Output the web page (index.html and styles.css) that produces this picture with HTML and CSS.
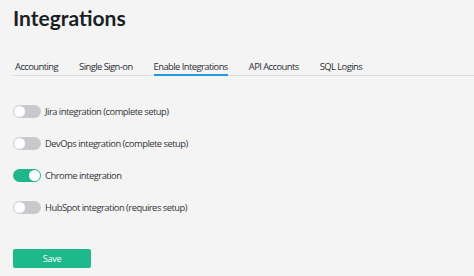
FILE: index.html
```html
<!DOCTYPE html>
<html lang="en">
<head>
  <meta charset="UTF-8" />
  <title>Integrations</title>
  <meta name="viewport" content="width=device-width, initial-scale=1.0" />
  <link rel="stylesheet" href="styles.css">
</head>
<body>
  <div class="page">
    <h1>Integrations</h1>

    <nav class="tabs">
      <a href="#">Accounting</a>
      <a href="#">Single Sign-on</a>
      <a href="#" class="active">Enable Integrations</a>
      <a href="#">API Accounts</a>
      <a href="#">SQL Logins</a>
    </nav>

    <ul class="toggles">
      <li><span class="switch"></span>Jira integration (complete setup)</li>
      <li><span class="switch"></span>DevOps integration (complete setup)</li>
      <li><span class="switch on"></span>Chrome integration</li>
      <li><span class="switch"></span>HubSpot integration (requires setup)</li>
    </ul>

    <button class="btn">Save</button>
  </div>
</body>
</html>
```

FILE: styles.css
```css
* { margin: 0; padding: 0; box-sizing: border-box; }
html, body { height: 100%; font-family: 'Open Sans', sans-serif; background: #f4f4f4; color: #2b2f33; }

.page { padding: 4px 0 0 13px; }

h1 { font-family: 'Lato', sans-serif; font-size: 21px; font-weight: 700; color: #1b1f24; line-height: 28px; }

.tabs {
  display: flex; gap: 21px; margin-top: 28px; padding-left: 2px;
  border-bottom: 1px solid #dcdcdc;
}
.tabs a {
  font-size: 9.4px; letter-spacing: -0.55px; line-height: 13px; color: #2b2f33; text-decoration: none;
  padding-bottom: 1px; border-bottom: 2px solid transparent; margin-bottom: -1px;
}
.tabs a.active { border-bottom-color: #1f9ae3; }

.toggles { list-style: none; margin-top: 28px; display: flex; flex-direction: column; gap: 18px; }
.toggles li {
  display: flex; align-items: center; gap: 4px; height: 14px;
  font-size: 9.4px; letter-spacing: -0.5px; color: #33373b;
}

.switch {
  position: relative; width: 28px; height: 13px; border-radius: 7px; background: #c9c9cd;
}
.switch::after {
  content: ""; position: absolute; top: 1px; left: 1px; width: 11px; height: 11px;
  border-radius: 50%; background: #fff;
}
.switch.on { background: #1fb68b; }
.switch.on::after { left: 16px; }

.btn {
  display: block; margin-top: 35px; width: 78px; height: 19px; border: none; border-radius: 2px;
  background: #1db98c; color: #fff; font-family: 'Open Sans', sans-serif; font-size: 9px; letter-spacing: -0.3px;
}
```
